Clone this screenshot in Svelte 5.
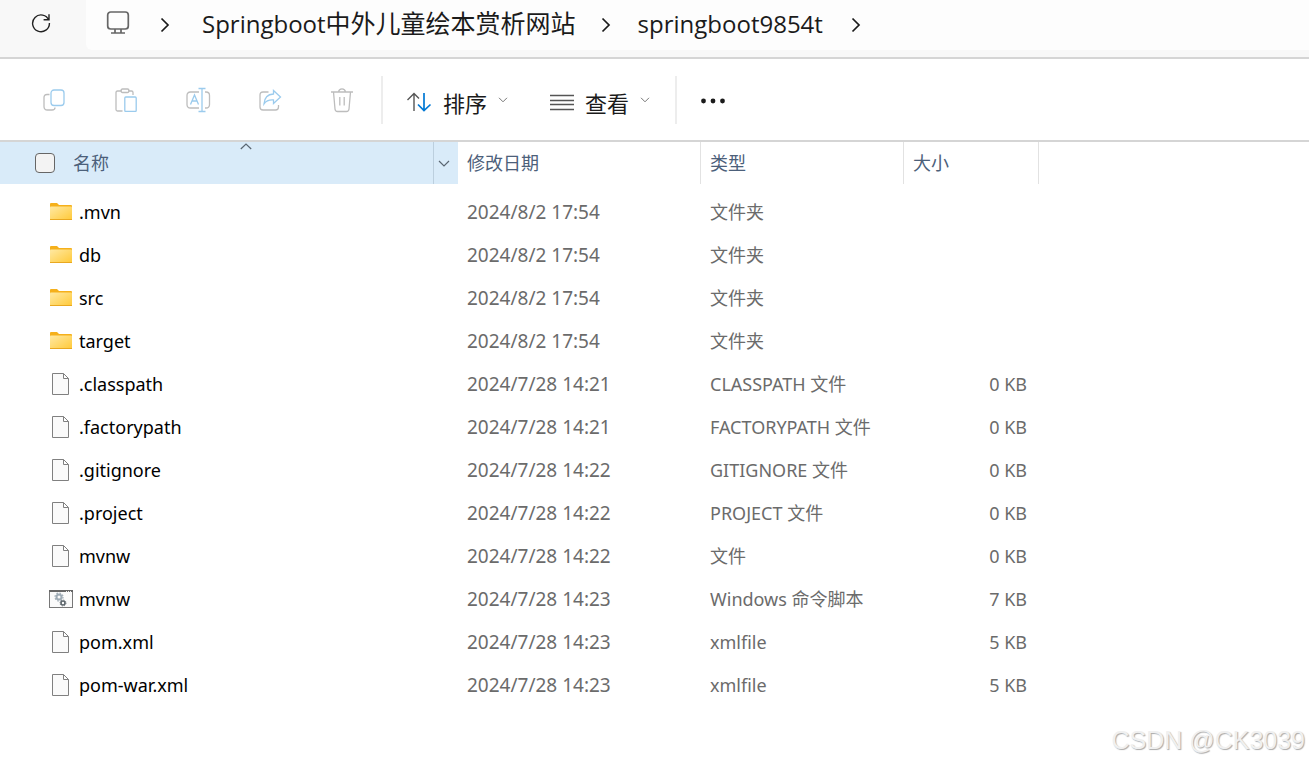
<script>
    // Contents of the open folder
    const files = [
        { name: '.mvn', date: '2024/8/2 17:54', type: '文件夹', size: '', icon: 'folder' },
        { name: 'db', date: '2024/8/2 17:54', type: '文件夹', size: '', icon: 'folder' },
        { name: 'src', date: '2024/8/2 17:54', type: '文件夹', size: '', icon: 'folder' },
        { name: 'target', date: '2024/8/2 17:54', type: '文件夹', size: '', icon: 'folder' },
        { name: '.classpath', date: '2024/7/28 14:21', type: 'CLASSPATH 文件', size: '0 KB', icon: 'file' },
        { name: '.factorypath', date: '2024/7/28 14:21', type: 'FACTORYPATH 文件', size: '0 KB', icon: 'file' },
        { name: '.gitignore', date: '2024/7/28 14:22', type: 'GITIGNORE 文件', size: '0 KB', icon: 'file' },
        { name: '.project', date: '2024/7/28 14:22', type: 'PROJECT 文件', size: '0 KB', icon: 'file' },
        { name: 'mvnw', date: '2024/7/28 14:22', type: '文件', size: '0 KB', icon: 'file' },
        { name: 'mvnw', date: '2024/7/28 14:23', type: 'Windows 命令脚本', size: '7 KB', icon: 'script' },
        { name: 'pom.xml', date: '2024/7/28 14:23', type: 'xmlfile', size: '5 KB', icon: 'file' },
        { name: 'pom-war.xml', date: '2024/7/28 14:23', type: 'xmlfile', size: '5 KB', icon: 'file' }
    ];

    let allSelected = $state(false);
</script>

{#snippet crumbArrow()}
    <svg class="crumb-arrow" width="10" height="16" viewBox="0 0 10 16" aria-hidden="true">
        <path d="M1.5 1.5 8 8 1.5 14.5" />
    </svg>
{/snippet}

{#snippet smallChevron()}
    <svg class="chevron" width="10" height="6" viewBox="0 0 10 6" aria-hidden="true">
        <path d="M1 .8 5 4.8 9 .8" />
    </svg>
{/snippet}

<div class="explorer">
    <header class="nav-bar">
        <button class="refresh" aria-label="刷新">
            <svg width="20" height="20" viewBox="0 0 20 20">
                <path d="M17.8 7.2A8.4 8.4 0 1 0 18.4 10M18 1.2V6.8H12.6" />
            </svg>
        </button>
        <nav class="address">
            <svg class="monitor" width="24" height="24" viewBox="0 0 24 24" aria-hidden="true">
                <rect x="1.7" y="1" width="20.6" height="17" rx="3" />
                <path d="M9 18v3.5M15 18v3.5M5 22H19" />
            </svg>
            {@render crumbArrow()}
            <a class="crumb root" href="#parent">Springboot<span class="hanzi">中外儿童绘本赏析网站</span></a>
            {@render crumbArrow()}
            <a class="crumb" href="#current">springboot9854t</a>
            {@render crumbArrow()}
        </nav>
    </header>

    <div class="toolbar">
        <div class="file-actions">
            <button aria-label="复制" disabled>
                <svg width="24" height="24" viewBox="0 0 24 24">
                    <path class="grey" d="M7.5 6.5H5Q2 6.5 2 9.5V18.5Q2 22 5.5 22H10Q13 22 13 19.5" />
                    <rect class="blue" x="9" y="2" width="13" height="15.5" rx="3" />
                </svg>
            </button>
            <button aria-label="粘贴" disabled>
                <svg width="24" height="24" viewBox="0 0 24 24">
                    <path class="grey" d="M8 3H3.5Q2 3 2 4.5V21.5Q2 23 3.5 23H8.5M14 3H17.5Q19 3 19 4.5V7" />
                    <rect class="grey" x="7" y="1" width="8" height="3.5" rx="1.5" />
                    <rect class="blue" x="10.8" y="9" width="11.4" height="14.5" rx="1" />
                </svg>
            </button>
            <button aria-label="重命名" disabled>
                <svg width="26" height="26" viewBox="0 0 26 26">
                    <path class="grey" d="M14 5H5.5Q2 5 2 8.5V17.5Q2 21 5.5 21H14M20 5H21Q24.5 5 24.5 8.5V17.5Q24.5 21 21 21H20" />
                    <path class="blue" d="M5.5 17.5 9.5 8 13.5 17.5M7 14H12M17 1.5V24.5M13.5 1.5H20.5M13.5 24.5H20.5" />
                </svg>
            </button>
            <button aria-label="共享" disabled>
                <svg width="24" height="24" viewBox="0 0 24 24">
                    <path class="grey" d="M10.5 4H5Q2 4 2 7V19Q2 22 5 22H17.5Q20.5 22 20.5 19V17" />
                    <path class="blue" d="M15.5 2.5 22.5 9 15.5 15.5V12Q9 11.5 6 16Q6.5 6.5 15.5 6Z" />
                </svg>
            </button>
            <button aria-label="删除" disabled>
                <svg width="24" height="26" viewBox="0 0 24 26">
                    <path class="grey" d="M1 5H23M3.5 5 5 22Q5.2 24.5 7.5 24.5H16.5Q18.8 24.5 19 22L20.5 5M8.5 5Q9 1.8 12 1.8T15.5 5M9.8 10V18.5M14.2 10V18.5" />
                </svg>
            </button>
        </div>
        <div class="view-actions">
            <button class="sort">
                <svg width="26" height="20" viewBox="0 0 26 20" aria-hidden="true">
                    <path class="dark" d="M8 19V1.5M1.5 8 8 1.5 13 6.5" />
                    <path class="accent" d="M18 1V18.5M12 12.5 18 18.5 24.5 12.5" />
                </svg>
                排序
                {@render smallChevron()}
            </button>
            <button class="view">
                <svg width="24" height="18" viewBox="0 0 24 18" aria-hidden="true">
                    <path class="dark" d="M0 2.5H24M0 7.5H24M0 11.5H24M0 16.5H24" />
                </svg>
                查看
                {@render smallChevron()}
            </button>
        </div>
        <button class="more" aria-label="更多">
            <svg width="26" height="6" viewBox="0 0 26 6">
                <circle cx="3.5" cy="3" r="2.4" />
                <circle cx="13" cy="3" r="2.4" />
                <circle cx="22.5" cy="3" r="2.4" />
            </svg>
        </button>
    </div>

    <main>
        <table>
            <colgroup>
                <col class="col-name" />
                <col class="col-date" />
                <col class="col-type" />
                <col class="col-size" />
                <col />
            </colgroup>
            <thead>
                <tr>
                    <th class="name-head">
                        <div class="name-head-inner">
                            <input id="select-all" type="checkbox" bind:checked={allSelected} />
                            <label for="select-all">名称</label>
                            <svg class="sort-mark" width="12" height="7" viewBox="0 0 12 7" aria-hidden="true">
                                <path d="M.8 6 6 1 11.2 6" />
                            </svg>
                            <button class="filter" aria-label="筛选">
                                <svg width="12" height="7" viewBox="0 0 12 7">
                                    <path d="M1 1 6 6 11 1" />
                                </svg>
                            </button>
                        </div>
                    </th>
                    <th class="divided">修改日期</th>
                    <th class="divided">类型</th>
                    <th class="divided">大小</th>
                    <td></td>
                </tr>
            </thead>
            <tbody>
                {#each files as file}
                    <tr>
                        <td>
                            <div class="file-name">
                                {#if file.icon === 'folder'}
                                    <svg width="24" height="26" viewBox="0 0 24 26" aria-hidden="true">
                                        <defs>
                                            <linearGradient id="folder-fill" x1="0" y1="0" x2="1" y2="1">
                                                <stop offset="0" stop-color="#ffe9a3" />
                                                <stop offset="1" stop-color="#ffc938" />
                                            </linearGradient>
                                        </defs>
                                        <path d="M1 5Q1 4 2 4H8L10 6H22Q23 6 23 7V10H1Z" fill="#f5b01b" />
                                        <rect x="1" y="7.5" width="22" height="13.5" rx=".8" fill="url(#folder-fill)" />
                                        <path d="M1 20.5H23" stroke="#e9a820" />
                                    </svg>
                                {:else if file.icon === 'script'}
                                    <svg width="24" height="26" viewBox="0 0 24 26" aria-hidden="true">
                                        <rect x=".5" y="4.5" width="23" height="17" fill="#fafafa" stroke="#777" />
                                        <path d="M0 5H24" stroke="#666" stroke-width="2" />
                                        <path d="M17 5.5H23" stroke="#eee" stroke-dasharray="1 1" />
                                        <circle cx="10" cy="11" r="2.5" fill="none" stroke="#9eabb5" stroke-width="2" />
                                        <circle cx="10" cy="11" r="4" fill="none" stroke="#9eabb5" stroke-width="1.2" stroke-dasharray="1.6 1.54" />
                                        <circle cx="14" cy="17" r="2" fill="none" stroke="#5d666c" stroke-width="1.6" />
                                        <circle cx="14" cy="17" r="3" fill="none" stroke="#5d666c" stroke-width=".8" stroke-dasharray="1.2 1.156" />
                                    </svg>
                                {:else}
                                    <svg width="24" height="26" viewBox="0 0 24 26" aria-hidden="true">
                                        <path d="M3.5 2.5H14.5L19.5 7.5V23.5H3.5ZM14.5 2.5V7.5H19.5" fill="#fafafa" stroke="#808080" />
                                    </svg>
                                {/if}
                                <span>{file.name}</span>
                            </div>
                        </td>
                        <td class="date">{file.date}</td>
                        <td>{file.type}</td>
                        <td class="size">{file.size}</td>
                        <td></td>
                    </tr>
                {/each}
            </tbody>
        </table>
    </main>

    <div class="watermark">CSDN @CK3039</div>
</div>

<style>
    :global(body) {
        background: #fff;
    }

    .explorer {
        position: relative;
        min-height: 100vh;
        font-family: "Noto Sans", "Noto Sans CJK SC", sans-serif;
        font-size: 18px;
        color: #6b6b6b;
    }

    button {
        display: flex;
        align-items: center;
        justify-content: center;
        padding: 0;
        border: none;
        background: none;
        font: inherit;
        color: inherit;
    }
    svg {
        display: block;
        flex: none;
    }

    /* address row */
    .nav-bar {
        display: flex;
        height: 57px;
        background: #f8f8f8;
        border-bottom: 2px solid #d5d5d5;
    }
    .refresh {
        width: 86px;
        height: 46px;
        padding-right: 4px;
    }
    .refresh path {
        fill: none;
        stroke: #222;
        stroke-width: 1.4;
    }
    .address {
        display: flex;
        flex: 1;
        align-items: center;
        height: 50px;
        padding: 0 20px;
        box-sizing: border-box;
        background: #fdfdfd;
        border-bottom-left-radius: 6px;
    }
    .monitor {
        margin: 0 30px 4px 0;
        fill: none;
        stroke: #666;
        stroke-width: 1.7;
    }
    .crumb-arrow path {
        fill: none;
        stroke: #1a1a1a;
        stroke-width: 1.7;
    }
    .crumb {
        margin: 0 28px 3px 27px;
        font-family: "Open Sans", "Noto Sans CJK SC", sans-serif;
        font-size: 24px;
        line-height: 36px;
        color: #1b1b1b;
        text-decoration: none;
        white-space: nowrap;
    }
    .root {
        margin-left: 32px;
        margin-right: 25px;
    }
    .hanzi {
        font-size: 25px;
    }

    /* command bar */
    .toolbar {
        display: flex;
        align-items: center;
        height: 81px;
        border-bottom: 2px solid #d5d5d5;
    }
    .file-actions,
    .view-actions {
        display: flex;
        align-items: center;
        height: 48px;
        border-right: 2px solid #ededed;
    }
    .file-actions {
        padding: 0 3px 0 18px;
    }
    .file-actions button {
        width: 72px;
        height: 48px;
    }
    .file-actions svg {
        fill: none;
        stroke-width: 1.3;
    }
    .grey {
        stroke: #bdbdbd;
    }
    .blue {
        stroke: #9bcbed;
    }
    .view-actions {
        gap: 42px;
        padding: 0 25px 0 23px;
    }
    .view-actions button {
        gap: 11px;
        height: 48px;
        padding-top: 4px;
        box-sizing: border-box;
        font-size: 22px;
        color: #1b1b1b;
    }
    .dark,
    .accent {
        fill: none;
        stroke: #555;
        stroke-width: 1.4;
    }
    .accent {
        stroke: #0078d4;
        stroke-width: 1.7;
    }
    .chevron {
        margin-bottom: 4px;
    }
    .chevron path {
        fill: none;
        stroke: #777;
    }
    .more {
        width: 72px;
        height: 48px;
        padding-top: 2px;
        box-sizing: border-box;
        fill: #1b1b1b;
    }

    /* file list */
    table {
        width: 100%;
        table-layout: fixed;
        border-collapse: separate;
        border-spacing: 0;
    }
    .col-name {
        width: 458px;
    }
    .col-date {
        width: 243px;
    }
    .col-type {
        width: 203px;
    }
    .col-size {
        width: 135px;
    }
    th,
    td {
        height: 43px;
        padding: 0 9px;
        box-sizing: border-box;
        line-height: 24px;
        text-align: left;
        white-space: nowrap;
    }
    th {
        height: 42px;
        font-weight: normal;
        color: #4c607a;
    }
    thead td {
        height: 42px;
    }
    .divided {
        border-right: 1px solid #e2e2e2;
    }
    .name-head {
        padding: 0;
        background: #d9ebf9;
    }
    .name-head-inner {
        position: relative;
        display: flex;
        align-items: center;
        gap: 18px;
        height: 42px;
        padding-left: 35px;
    }
    input {
        appearance: none;
        width: 20px;
        height: 20px;
        margin: 0;
        border: 1px solid #666;
        border-radius: 4px;
        background: #f3f3f3;
    }
    input:checked {
        background: #0078d4;
    }
    .sort-mark {
        position: absolute;
        top: 1px;
        left: 240px;
    }
    .name-head path {
        fill: none;
        stroke: #5a6672;
        stroke-width: 1.2;
    }
    .filter {
        width: 25px;
        height: 42px;
        margin-left: auto;
        padding-right: 4px;
        box-sizing: border-box;
        border-left: 1px solid #bccfde;
    }
    tbody::before {
        content: "";
        display: block;
        height: 6px;
    }
    .file-name {
        display: flex;
        align-items: center;
        gap: 6px;
        padding-left: 40px;
        color: #000;
    }
    .date {
        font-size: 19px;
    }
    .size {
        padding-right: 12px;
        text-align: right;
    }

    .watermark {
        position: absolute;
        right: 4px;
        bottom: 9px;
        font-family: "Liberation Sans", Arial, sans-serif;
        font-size: 25px;
        line-height: 28px;
        color: #f0f0f0;
        text-shadow: 1px 1px 1px #aaa;
    }
</style>
